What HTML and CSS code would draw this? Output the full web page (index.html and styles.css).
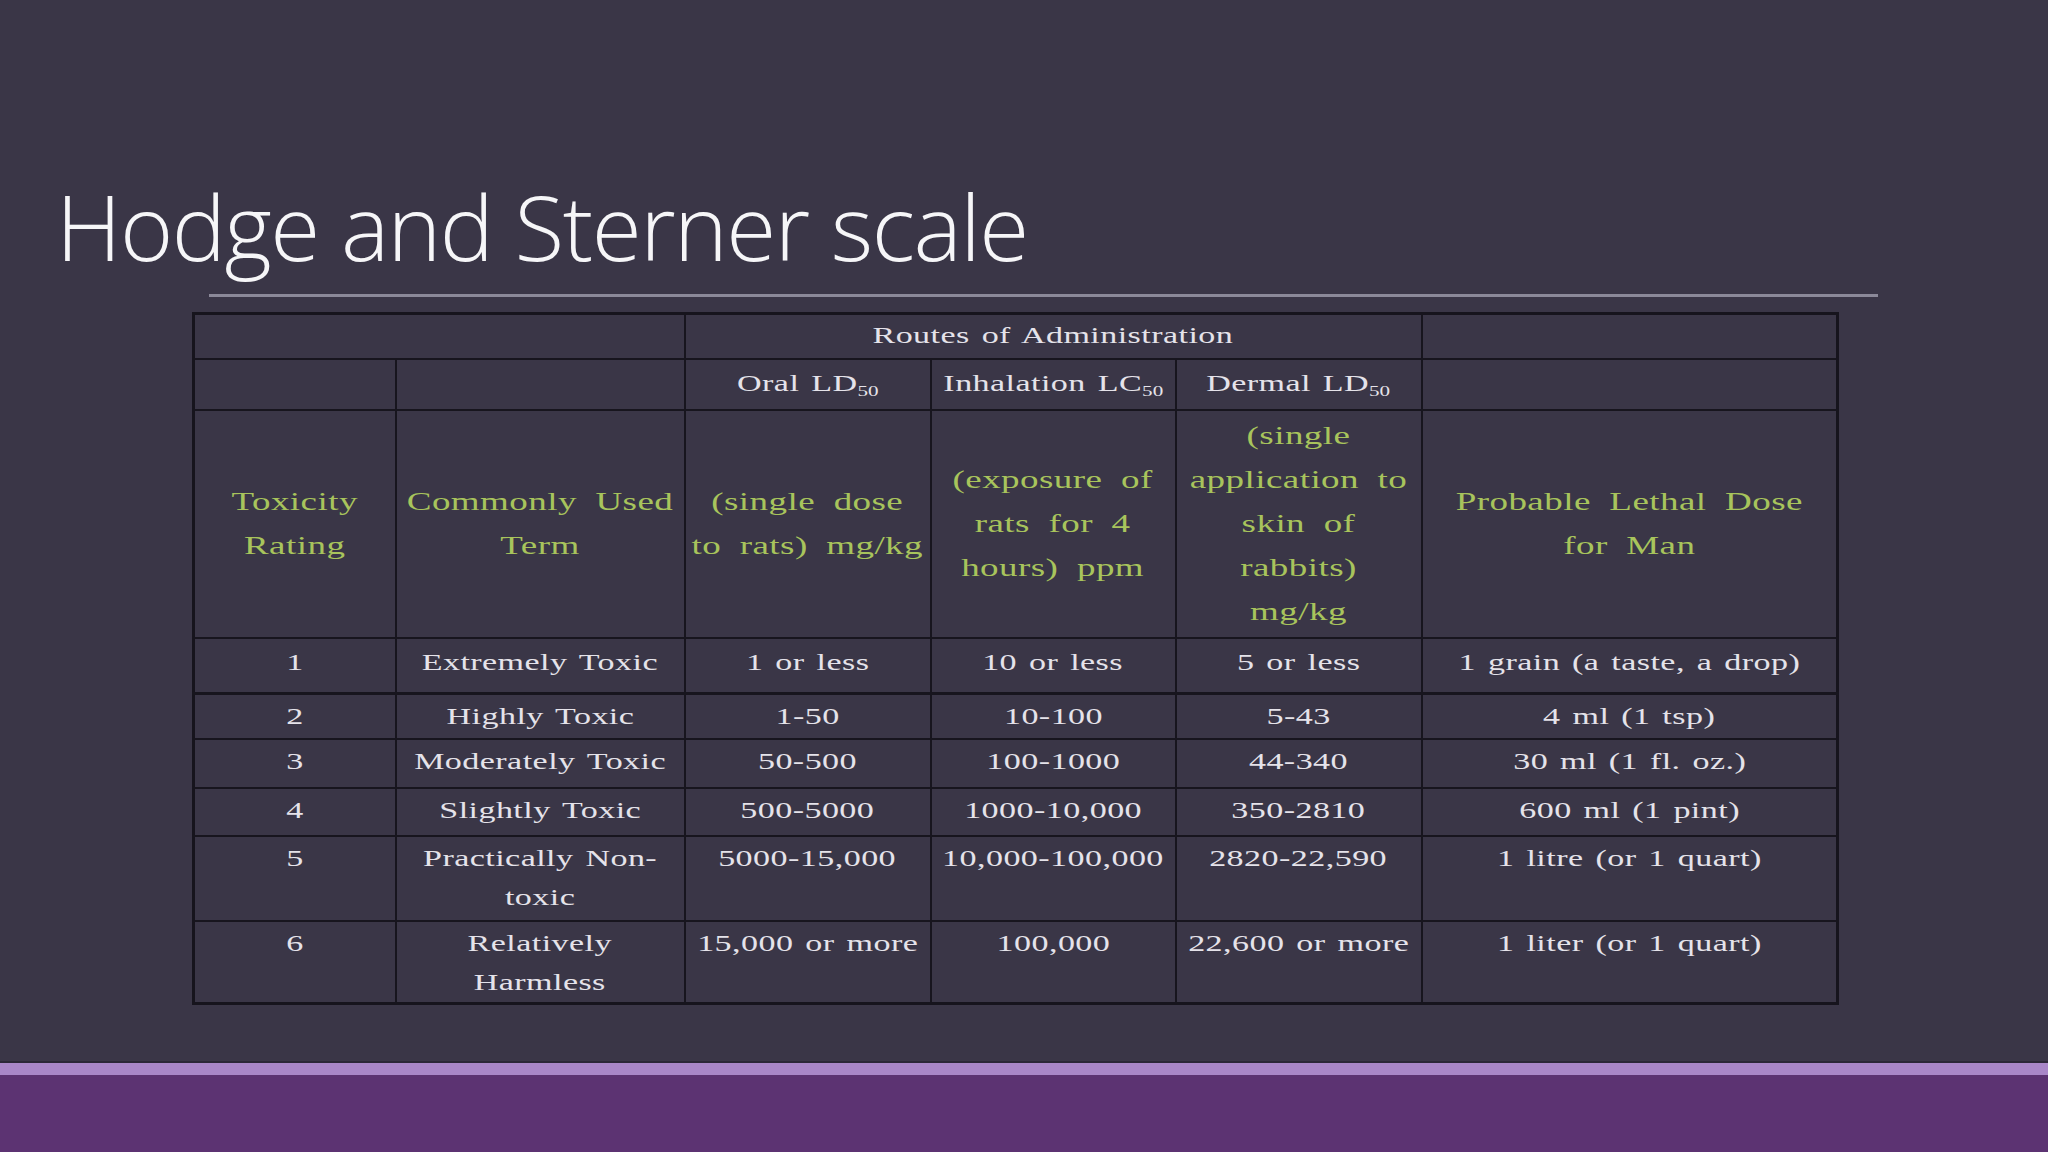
FILE: index.html
```html
<!DOCTYPE html>
<html lang="en">
<head>
<meta charset="utf-8">
<title>Hodge and Sterner scale</title>
<link rel="stylesheet" href="styles.css">
</head>
<body>
<div class="slide">
  <h1 class="title">Hodge and Sterner scale</h1>
  <div class="rule"></div>
  <table class="scale">
    <colgroup>
      <col class="c1"><col class="c2"><col class="c3"><col class="c4"><col class="c5"><col class="c6">
    </colgroup>
    <tr class="hr1">
      <td colspan="2"></td>
      <td colspan="3"><span class="t">Routes of Administration</span></td>
      <td></td>
    </tr>
    <tr class="hr2">
      <td></td>
      <td></td>
      <td><span class="t">Oral LD<sub>50</sub></span></td>
      <td><span class="t">Inhalation LC<sub>50</sub></span></td>
      <td><span class="t">Dermal LD<sub>50</sub></span></td>
      <td></td>
    </tr>
    <tr class="hr3">
      <td><span class="t">Toxicity<br>Rating</span></td>
      <td><span class="t">Commonly Used<br>Term</span></td>
      <td><span class="t">(single dose<br>to rats) mg/kg</span></td>
      <td><span class="t">(exposure of<br>rats for 4<br>hours) ppm</span></td>
      <td><span class="t">(single<br>application to<br>skin of<br>rabbits)<br>mg/kg</span></td>
      <td><span class="t">Probable Lethal Dose<br>for Man</span></td>
    </tr>
    <tr class="dr r1">
      <td><span class="t">1</span></td>
      <td><span class="t">Extremely Toxic</span></td>
      <td><span class="t">1 or less</span></td>
      <td><span class="t">10 or less</span></td>
      <td><span class="t">5 or less</span></td>
      <td><span class="t">1 grain (a taste, a drop)</span></td>
    </tr>
    <tr class="dr r2">
      <td><span class="t">2</span></td>
      <td><span class="t">Highly Toxic</span></td>
      <td><span class="t">1-50</span></td>
      <td><span class="t">10-100</span></td>
      <td><span class="t">5-43</span></td>
      <td><span class="t">4 ml (1 tsp)</span></td>
    </tr>
    <tr class="dr r3">
      <td><span class="t">3</span></td>
      <td><span class="t">Moderately Toxic</span></td>
      <td><span class="t">50-500</span></td>
      <td><span class="t">100-1000</span></td>
      <td><span class="t">44-340</span></td>
      <td><span class="t">30 ml (1 fl. oz.)</span></td>
    </tr>
    <tr class="dr r4">
      <td><span class="t">4</span></td>
      <td><span class="t">Slightly Toxic</span></td>
      <td><span class="t">500-5000</span></td>
      <td><span class="t">1000-10,000</span></td>
      <td><span class="t">350-2810</span></td>
      <td><span class="t">600 ml (1 pint)</span></td>
    </tr>
    <tr class="dr r5">
      <td><span class="t">5</span></td>
      <td><span class="t">Practically Non-<br>toxic</span></td>
      <td><span class="t">5000-15,000</span></td>
      <td><span class="t">10,000-100,000</span></td>
      <td><span class="t">2820-22,590</span></td>
      <td><span class="t">1 litre (or 1 quart)</span></td>
    </tr>
    <tr class="dr r6">
      <td><span class="t">6</span></td>
      <td><span class="t">Relatively<br>Harmless</span></td>
      <td><span class="t">15,000 or more</span></td>
      <td><span class="t">100,000</span></td>
      <td><span class="t">22,600 or more</span></td>
      <td><span class="t">1 liter (or 1 quart)</span></td>
    </tr>
  </table>
  <div class="footer"></div>
</div>
</body>
</html>
```
FILE: styles.css
```css
html, body {
  margin: 0;
  padding: 0;
  background: #3a3647;
}

.slide {
  width: 2048px;
  height: 1152px;
  display: flex;
  flex-direction: column;
  overflow: hidden;
  background: #3a3647;
}

.title {
  margin: 172px 0 0 56px;
  font-family: "Open Sans", "Liberation Sans", sans-serif;
  font-weight: 300;
  font-size: 91px;
  line-height: 109px;
  letter-spacing: -1.5px;
  color: #f6f6f8;
}

.rule {
  margin: 13px 0 0 209px;
  width: 1669px;
  height: 3px;
  background: #8b8999;
}

.scale {
  margin: 15px 0 0 192px;
  width: 1644px;
  border-collapse: collapse;
  table-layout: fixed;
  border: 3px solid #16141d;
  font-family: "Liberation Serif", "Times New Roman", serif;
  color: #e5e3ea;
}

.c1 { width: 202px; }
.c2 { width: 289px; }
.c3 { width: 246px; }
.c4 { width: 245px; }
.c5 { width: 246px; }
.c6 { width: 416px; }

.scale td {
  border: 2px solid #17151e;
  padding: 0;
  text-align: center;
  vertical-align: middle;
  font-size: 23px;
  line-height: 40px;
}

.t {
  display: inline-block;
  vertical-align: top;
  letter-spacing: 0.3px;
  word-spacing: 2px;
  transform: scaleX(1.48);
  transform-origin: 50% 50%;
  white-space: nowrap;
}

.t sub {
  font-size: 0.62em;
  line-height: 0;
  vertical-align: -0.35em;
  letter-spacing: 0;
}

.hr1 { height: 45px; }
.hr2 { height: 51px; }
.hr3 { height: 228px; }

.hr3 td {
  font-size: 25px;
  line-height: 44px;
  color: #a8c45c;
}

.hr3 .t { word-spacing: 6px; }

.dr td {
  vertical-align: top;
  padding-top: 2px;
}

.r1 { height: 56px; }
.r1 td { padding-top: 4px; }
.r2 { height: 45px; border-top: 3px solid #17151e; }
.r3 { height: 49px; }
.r4 { height: 48px; }
.r5 { height: 85px; }
.r6 { height: 79px; }

.r5 td, .r6 td { line-height: 39px; }

.footer {
  margin-top: auto;
  height: 91px;
  box-sizing: border-box;
  border-top: 2px solid #2c2838;
  background: linear-gradient(#a987c8 0, #a987c8 12px, #5c3372 12px, #5c3372 100%);
}
```
